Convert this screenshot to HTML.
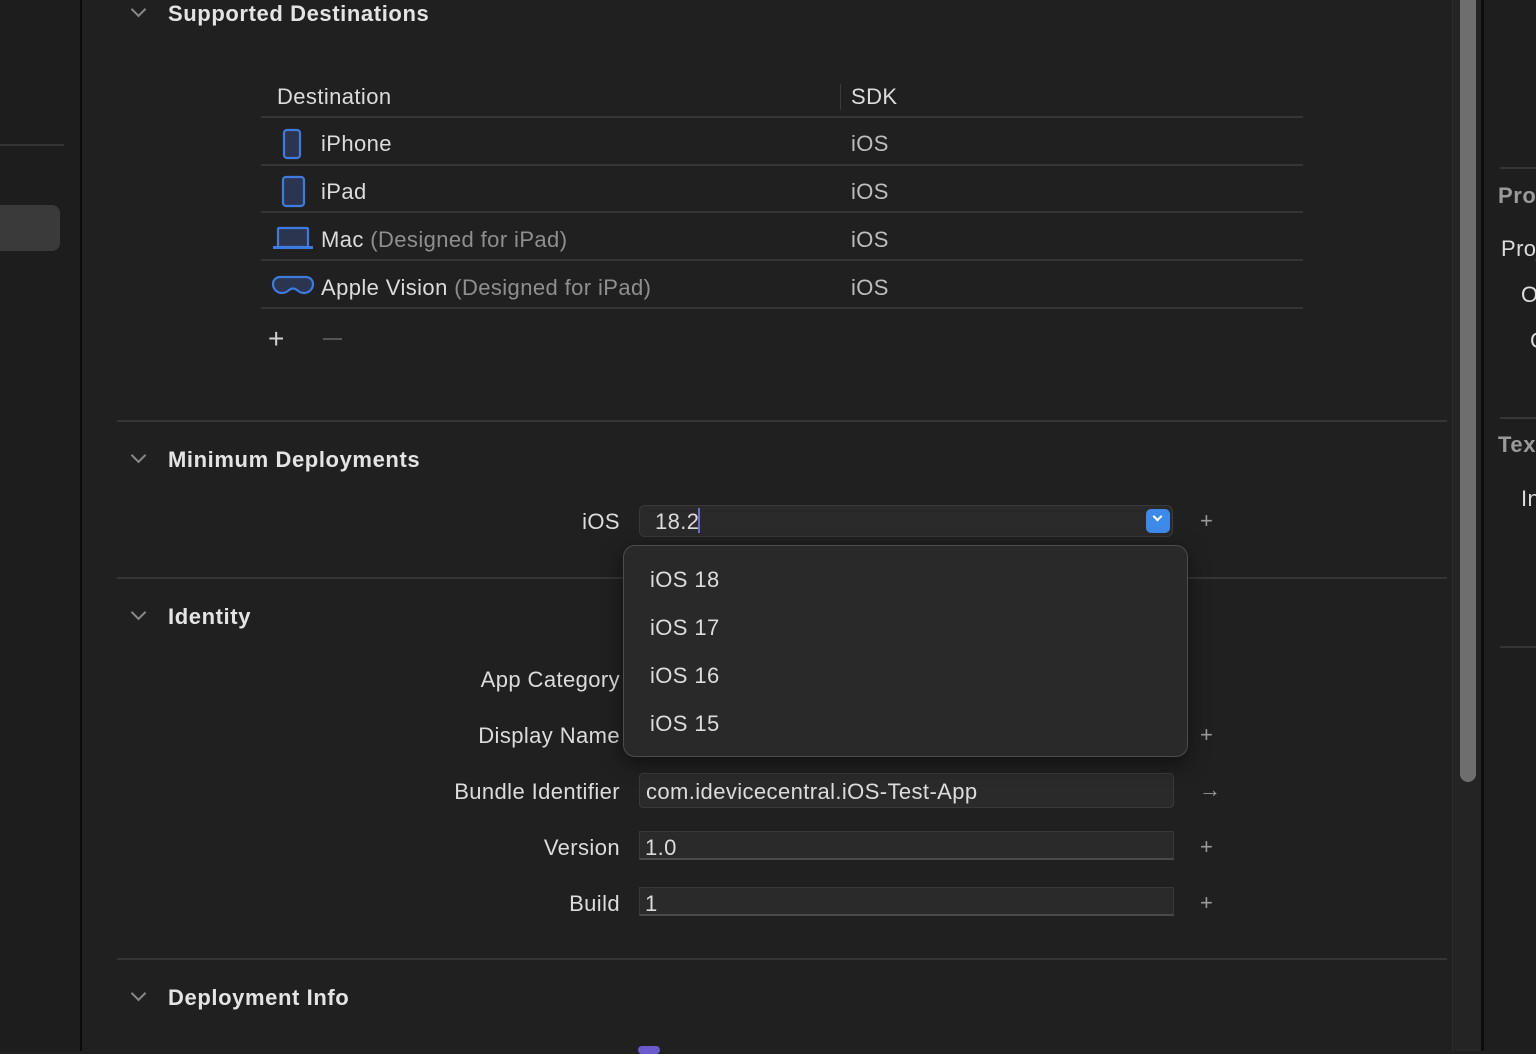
<!DOCTYPE html>
<html><head><meta charset="utf-8"><style>
*{margin:0;padding:0;box-sizing:border-box}
body{width:1536px;height:1051px;overflow:hidden;background:#212021;font-family:"Liberation Sans",sans-serif;color:#e6e6e6;position:relative}
.a{position:absolute;white-space:nowrap}
.h{font-weight:bold;font-size:22px;color:#e4e4e4;letter-spacing:0.6px}
.t{font-size:22px;color:#dcdcdc;letter-spacing:0.4px}
.g{color:#8f8f8f}
.line{position:absolute;height:2px;background:#363536}
.chev{position:absolute;width:11px;height:11px;border-right:2px solid #8a8a8a;border-bottom:2px solid #8a8a8a;transform:rotate(45deg)}
.field{position:absolute;background:#2b2a2b;border:1px solid #3a393a;border-radius:4px}
.lbl{position:absolute;font-size:22px;color:#dcdcdc;text-align:right;width:300px;letter-spacing:0.4px}
.plus{position:absolute;font-size:22px;color:#9a9a9a}
</style></head><body>
<div class="a" style="left:0;top:0;width:80px;height:1051px;background:#1e1d1e"></div>
<div class="a" style="left:80px;top:0;width:2px;height:1051px;background:#0c0c0c"></div>
<div class="line" style="left:0;top:144px;width:64px"></div>
<div class="a" style="left:0;top:205px;width:60px;height:46px;background:#3b3a3b;border-radius:0 8px 8px 0"></div>

<div class="chev" style="left:133px;top:4px"></div>
<div class="a h" style="left:168px;top:1px">Supported Destinations</div>
<div class="a t" style="left:277px;top:84px">Destination</div>
<div class="a" style="left:840px;top:84px;width:1px;height:26px;background:#3c3b3c"></div>
<div class="a t" style="left:851px;top:84px">SDK</div>
<div class="line" style="left:261px;top:116px;width:1042px"></div>
<div class="line" style="left:261px;top:164px;width:1042px"></div>
<div class="line" style="left:261px;top:211px;width:1042px"></div>
<div class="line" style="left:261px;top:259px;width:1042px"></div>
<div class="line" style="left:261px;top:307px;width:1042px"></div>

<svg class="a" style="left:272px;top:126px" width="44" height="170">
<rect x="12" y="4" width="16" height="28" rx="3" fill="#2c3550" stroke="#3d7be0" stroke-width="2.2"/>
<rect x="11" y="51" width="21" height="29" rx="3" fill="#2c3550" stroke="#3d7be0" stroke-width="2.2"/>
<rect x="6" y="102" width="30" height="19" rx="1" fill="#2c3550" stroke="#3d7be0" stroke-width="2.2"/>
<rect x="1" y="120" width="40" height="3" fill="#3d7be0"/>
<path d="M8 151 h26 a7 7 0 0 1 7 7 a9 9 0 0 1 -9 9 q-4 0 -7 -3 q-4 -3 -8 0 q-3 3 -7 3 a9 9 0 0 1 -9 -9 a7 7 0 0 1 7 -7z" fill="#2c3550" stroke="#3d7be0" stroke-width="2.2"/>
</svg>
<div class="a t" style="left:321px;top:131px">iPhone</div>
<div class="a t" style="left:321px;top:179px">iPad</div>
<div class="a t" style="left:321px;top:227px">Mac <span class="g">(Designed for iPad)</span></div>
<div class="a t" style="left:321px;top:275px">Apple Vision <span class="g">(Designed for iPad)</span></div>
<div class="a t" style="left:851px;top:131px;color:#bdbdbd">iOS</div>
<div class="a t" style="left:851px;top:179px;color:#bdbdbd">iOS</div>
<div class="a t" style="left:851px;top:227px;color:#bdbdbd">iOS</div>
<div class="a t" style="left:851px;top:275px;color:#bdbdbd">iOS</div>
<div class="a" style="left:268px;top:323px;font-size:28px;color:#d0d0d0">+</div>
<div class="a" style="left:323px;top:338px;width:19px;height:2px;background:#555"></div>

<div class="line" style="left:117px;top:420px;width:1330px"></div>

<div class="chev" style="left:133px;top:450px"></div>
<div class="a h" style="left:168px;top:447px">Minimum Deployments</div>
<div class="lbl" style="left:320px;top:509px">iOS</div>
<div class="field" style="left:639px;top:505px;width:534px;height:32px;border-radius:6px"></div>
<div class="a t" style="left:655px;top:509px">18.2</div>
<div class="a" style="left:698px;top:508px;width:2px;height:25px;background:#6b6bd0"></div>
<div class="a" style="left:1146px;top:509px;width:24px;height:24px;background:#3e8ae8;border-radius:5px"></div>
<div class="chev" style="left:1154px;top:513px;width:7px;height:7px;border-color:#fff"></div>
<div class="plus" style="left:1200px;top:508px">+</div>

<div class="line" style="left:117px;top:577px;width:1330px"></div>

<div class="chev" style="left:133px;top:607px"></div>
<div class="a h" style="left:168px;top:604px">Identity</div>
<div class="lbl" style="left:320px;top:667px">App Category</div>
<div class="lbl" style="left:320px;top:723px">Display Name</div>
<div class="plus" style="left:1200px;top:722px">+</div>
<div class="lbl" style="left:320px;top:779px">Bundle Identifier</div>
<div class="field" style="left:639px;top:773px;width:535px;height:35px"></div>
<div class="a t" style="left:646px;top:779px">com.idevicecentral.iOS-Test-App</div>
<div class="plus" style="left:1199px;top:777px">→</div>
<div class="lbl" style="left:320px;top:835px">Version</div>
<div class="field" style="left:639px;top:831px;width:535px;height:29px;border-radius:0;border-bottom:2px solid #4a494a"></div>
<div class="a t" style="left:645px;top:835px">1.0</div>
<div class="plus" style="left:1200px;top:834px">+</div>
<div class="lbl" style="left:320px;top:891px">Build</div>
<div class="field" style="left:639px;top:887px;width:535px;height:29px;border-radius:0;border-bottom:2px solid #4a494a"></div>
<div class="a t" style="left:645px;top:891px">1</div>
<div class="plus" style="left:1200px;top:890px">+</div>

<div class="line" style="left:117px;top:958px;width:1330px"></div>
<div class="chev" style="left:133px;top:988px"></div>
<div class="a h" style="left:168px;top:985px">Deployment Info</div>
<div class="a" style="left:638px;top:1046px;width:22px;height:8px;background:#6a5acd;border-radius:4px"></div>

<div class="a" style="left:623px;top:545px;width:565px;height:212px;background:#2a292a;border:1px solid #4e4d4e;border-radius:12px;box-shadow:0 6px 20px rgba(0,0,0,.5)"></div>
<div class="a t" style="left:650px;top:567px">iOS 18</div>
<div class="a t" style="left:650px;top:615px">iOS 17</div>
<div class="a t" style="left:650px;top:663px">iOS 16</div>
<div class="a t" style="left:650px;top:711px">iOS 15</div>

<div class="a" style="left:1452px;top:0;width:29px;height:1051px;background:#252425;border-left:1px solid #2e2d2e"></div>
<div class="a" style="left:1460px;top:-10px;width:16px;height:792px;background:#6e6e6e;border-radius:8px"></div>
<div class="a" style="left:1481px;top:0;width:3px;height:1051px;background:#0c0c0c"></div>

<div class="a" style="left:1484px;top:0;width:52px;height:1051px;background:#1f1e1f"></div>
<div class="line" style="left:1500px;top:167px;width:36px"></div>
<div class="a h" style="left:1498px;top:183px;color:#9a9a9a">Project</div>
<div class="a t" style="left:1501px;top:236px">Project</div>
<div class="a t" style="left:1521px;top:282px">O</div>
<div class="a t" style="left:1530px;top:328px">C</div>
<div class="line" style="left:1500px;top:417px;width:36px"></div>
<div class="a h" style="left:1498px;top:432px;color:#9a9a9a">Text</div>
<div class="a t" style="left:1521px;top:486px">In</div>
<div class="line" style="left:1500px;top:646px;width:36px"></div>
</body></html>
